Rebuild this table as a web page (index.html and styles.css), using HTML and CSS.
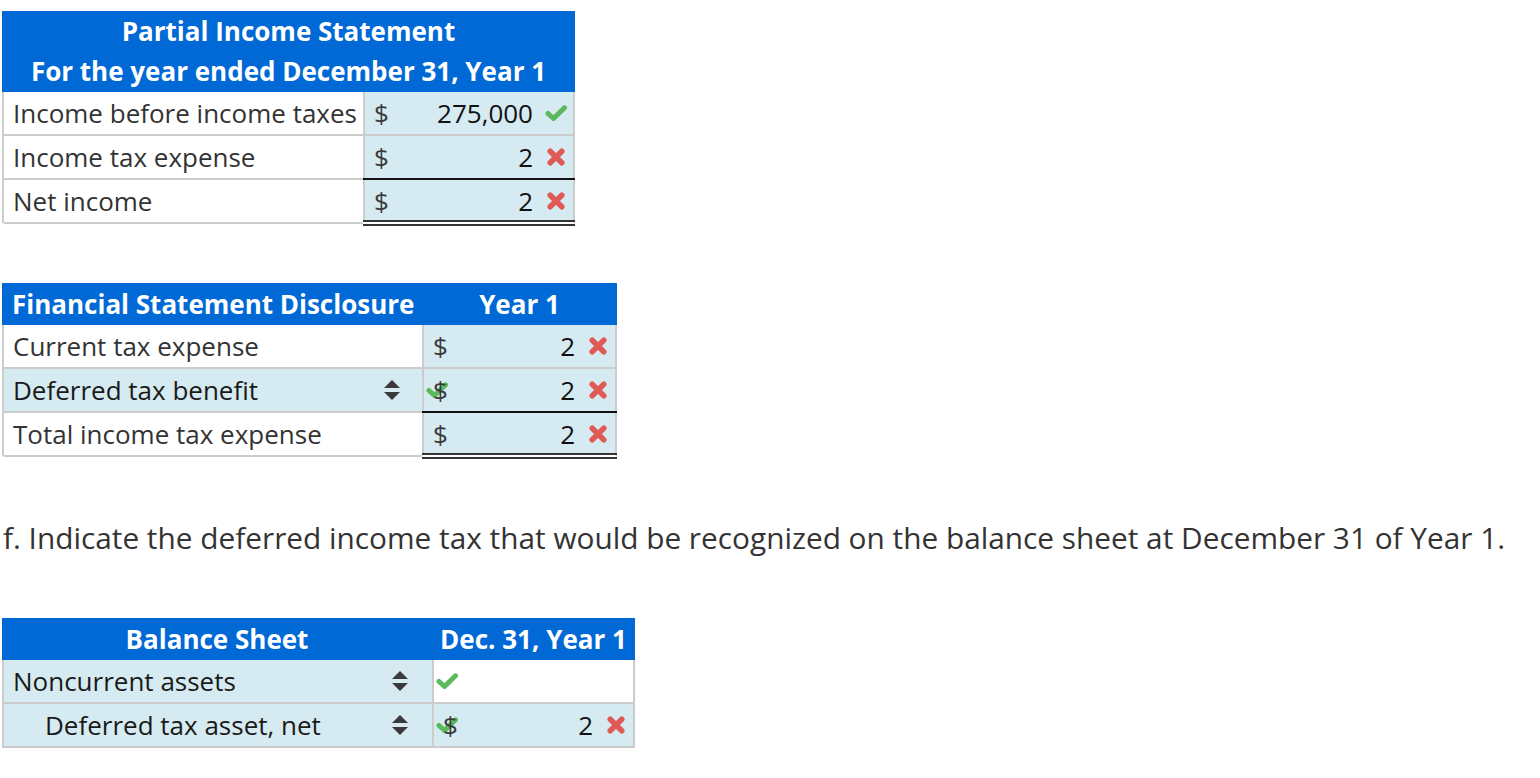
FILE: index.html
```html
<!DOCTYPE html>
<html>
<head>
<meta charset="utf-8">
<link rel="stylesheet" href="styles.css">
</head>
<body>
<div class="page">

  <div class="stmt t1">
    <div class="hd hd-two">
      <div>Partial Income Statement</div>
      <div>For the year ended December 31, Year 1</div>
    </div>
    <div class="row">
      <div class="lbl">Income before income taxes</div>
      <div class="val"><span class="cur">$</span><span class="num">275,000</span><span class="ic"><svg class="ok" viewBox="0 0 22 16"><path d="M3 8.5 L8.5 13.5 L19.5 2.8"/></svg></span></div>
    </div>
    <div class="row">
      <div class="lbl">Income tax expense</div>
      <div class="val"><span class="cur">$</span><span class="num">2</span><span class="ic"><svg class="bad" viewBox="0 0 18 18"><path d="M3.2 3.2 L14.8 14.8 M14.8 3.2 L3.2 14.8"/></svg></span></div>
    </div>
    <div class="row">
      <div class="lbl">Net income</div>
      <div class="val sum total"><span class="cur">$</span><span class="num">2</span><span class="ic"><svg class="bad" viewBox="0 0 18 18"><path d="M3.2 3.2 L14.8 14.8 M14.8 3.2 L3.2 14.8"/></svg></span></div>
    </div>
  </div>

  <div class="stmt t2">
    <div class="hd hd-row">
      <div class="hl">Financial Statement Disclosure</div>
      <div class="hv">Year 1</div>
    </div>
    <div class="row">
      <div class="lbl">Current tax expense</div>
      <div class="val"><span class="cur">$</span><span class="num">2</span><span class="ic"><svg class="bad" viewBox="0 0 18 18"><path d="M3.2 3.2 L14.8 14.8 M14.8 3.2 L3.2 14.8"/></svg></span></div>
    </div>
    <div class="row">
      <div class="lbl sel">Deferred tax benefit<span class="arrows"><svg viewBox="0 0 16 20"><path d="M0 8 L8 0 L16 8 Z M0 12 L16 12 L8 20 Z"/></svg></span></div>
      <div class="val"><span class="mark"><svg class="ok" viewBox="0 0 22 16"><path d="M3 8.5 L8.5 13.5 L19.5 2.8"/></svg></span><span class="cur">$</span><span class="num">2</span><span class="ic"><svg class="bad" viewBox="0 0 18 18"><path d="M3.2 3.2 L14.8 14.8 M14.8 3.2 L3.2 14.8"/></svg></span></div>
    </div>
    <div class="row">
      <div class="lbl">Total income tax expense</div>
      <div class="val sum total"><span class="cur">$</span><span class="num">2</span><span class="ic"><svg class="bad" viewBox="0 0 18 18"><path d="M3.2 3.2 L14.8 14.8 M14.8 3.2 L3.2 14.8"/></svg></span></div>
    </div>
  </div>

  <p class="question">f. Indicate the deferred income tax that would be recognized on the balance sheet at December 31 of Year 1.</p>

  <div class="stmt t3">
    <div class="hd hd-row">
      <div class="hl center">Balance Sheet</div>
      <div class="hv">Dec. 31, Year 1</div>
    </div>
    <div class="row">
      <div class="lbl sel">Noncurrent assets<span class="arrows"><svg viewBox="0 0 16 20"><path d="M0 8 L8 0 L16 8 Z M0 12 L16 12 L8 20 Z"/></svg></span></div>
      <div class="val blank"><span class="mark"><svg class="ok" viewBox="0 0 22 16"><path d="M3 8.5 L8.5 13.5 L19.5 2.8"/></svg></span></div>
    </div>
    <div class="row">
      <div class="lbl sel indent">Deferred tax asset, net<span class="arrows"><svg viewBox="0 0 16 20"><path d="M0 8 L8 0 L16 8 Z M0 12 L16 12 L8 20 Z"/></svg></span></div>
      <div class="val"><span class="mark"><svg class="ok" viewBox="0 0 22 16"><path d="M3 8.5 L8.5 13.5 L19.5 2.8"/></svg></span><span class="cur">$</span><span class="num">2</span><span class="ic"><svg class="bad" viewBox="0 0 18 18"><path d="M3.2 3.2 L14.8 14.8 M14.8 3.2 L3.2 14.8"/></svg></span></div>
    </div>
  </div>

</div>
</body>
</html>
```

FILE: styles.css
```css
html, body {
  margin: 0;
  padding: 0;
  background: #ffffff;
}

body {
  font-family: "Open Sans", "Liberation Sans", sans-serif;
  font-size: 26px;
  color: #333333;
}

.page {
  display: flex;
  flex-direction: column;
  align-items: flex-start;
  padding: 11px 0 0 2px;
}

.stmt {
  display: flex;
  flex-direction: column;
}

.t1 { width: 573px; }
.t2 { width: 615px; margin-top: 59px; }
.t3 { width: 633px; }

.t1 .lbl { width: 359px; }
.t2 .lbl { width: 418px; }
.t3 .lbl { width: 428px; }

.hd {
  background: #0069d6;
  color: #ffffff;
  font-weight: 700;
}

.hd-two {
  text-align: center;
  line-height: 40px;
  padding-bottom: 1px;
}

.hd-row {
  display: flex;
  height: 42px;
  line-height: 42px;
}

.hd-row .hl {
  padding-left: 10px;
}

.t2 .hd-row .hl { width: 410px; }
.t3 .hd-row .hl { width: 430px; padding-left: 0; }

.hd-row .hl.center {
  text-align: center;
}

.hd-row .hv {
  flex: 1;
  text-align: center;
}

.row {
  display: flex;
  height: 42px;
  border-left: 2px solid #cccccc;
  border-right: 2px solid #cccccc;
  border-bottom: 2px solid #cccccc;
}

.lbl {
  display: flex;
  align-items: center;
  padding-left: 9px;
  padding-bottom: 1px;
  box-sizing: border-box;
  white-space: nowrap;
  background: #ffffff;
}

.lbl.sel {
  background: #d5eaf1;
  color: #1a1a1a;
  justify-content: space-between;
  padding-right: 22px;
}

.t3 .lbl.sel {
  padding-right: 24px;
}

.lbl.indent {
  padding-left: 41px;
}

.arrows {
  display: flex;
  align-items: center;
}

.arrows svg {
  width: 16px;
  height: 20px;
  fill: #3a3a3a;
}

.val {
  position: relative;
  flex: 1;
  display: flex;
  align-items: center;
  background: #d5eaf1;
  border-left: 2px solid #cccccc;
  padding-left: 9px;
  padding-right: 6px;
  padding-bottom: 1px;
  color: #111111;
}

.val.blank {
  background: #ffffff;
}

.val .cur {
  color: #3a3a3a;
  position: relative;
}

.val .num {
  flex: 1;
  text-align: right;
}

.val .ic {
  width: 22px;
  margin-left: 12px;
  display: flex;
  justify-content: center;
  align-items: center;
}

.val.sum::before {
  content: "";
  position: absolute;
  left: -2px;
  right: -2px;
  top: -2px;
  height: 2px;
  background: #111111;
}

.row:has(.total) {
  border-bottom-color: transparent;
}

.val.total::after {
  content: "";
  position: absolute;
  left: -2px;
  right: -2px;
  bottom: -4px;
  height: 6px;
  border-top: 2px solid #333333;
  border-bottom: 2px solid #333333;
  box-sizing: border-box;
}

.row:has(.total) .lbl {
  box-shadow: 0 2px 0 #cccccc;
}

svg.ok {
  width: 22px;
  height: 16px;
  fill: none;
  stroke: #5cb85c;
  stroke-width: 5;
  stroke-linecap: round;
  stroke-linejoin: round;
}

svg.bad {
  width: 18px;
  height: 18px;
  fill: none;
  stroke: #e05a55;
  stroke-width: 5.5;
  stroke-linecap: round;
}

.mark {
  position: absolute;
  left: 2px;
  top: 50%;
  margin-top: -8px;
  display: flex;
}

.question {
  margin: 61px 0 60px 1px;
  line-height: 40px;
  font-size: 29.8px;
  color: #333333;
  white-space: nowrap;
}
```
